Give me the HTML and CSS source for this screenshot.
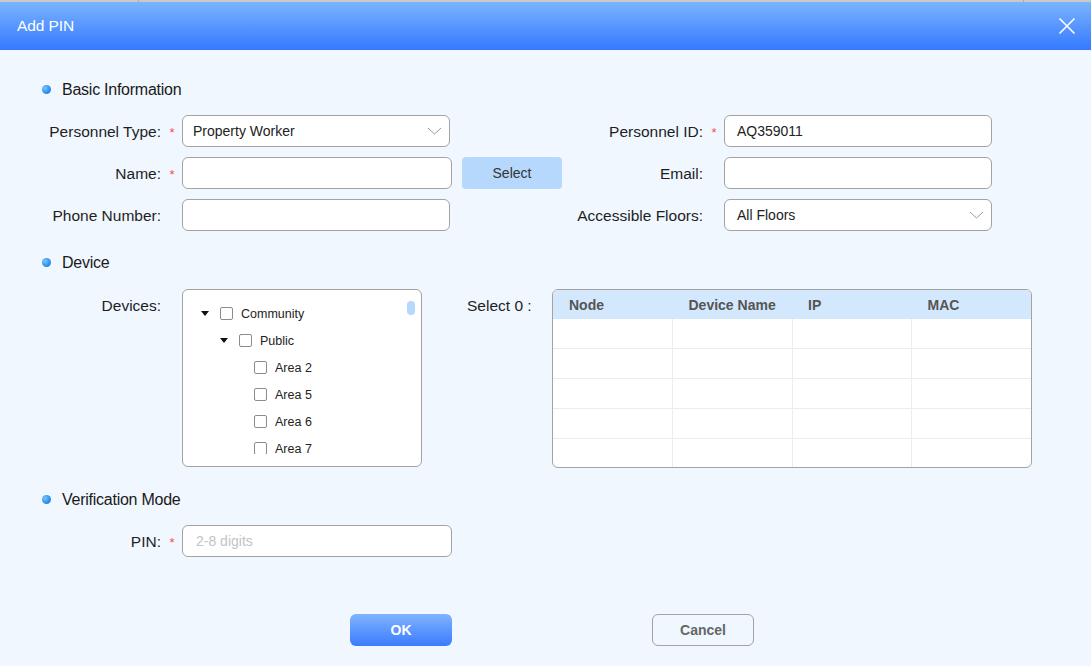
FILE: index.html
```html
<!DOCTYPE html>
<html>
<head>
<meta charset="utf-8">
<title>Add PIN</title>
<link rel="stylesheet" href="styles.css">
</head>
<body>
<div class="dialog">
  <div class="topstrip"><span class="sep sep1"></span><span class="sep sep2"></span></div>
  <div class="header">
    <span class="title">Add PIN</span>
    <svg class="close" width="18" height="18" viewBox="0 0 18 18"><path d="M1.5 1.5 L16.5 16.5 M16.5 1.5 L1.5 16.5" stroke="#fff" stroke-width="1.6" fill="none"/></svg>
  </div>
  <div class="content">
    <div class="section-title"><span class="dot"></span>Basic Information</div>
    <div class="rows">
      <div class="row">
        <label class="lbl">Personnel Type:</label><span class="star">*</span>
        <div class="input select-box"><span>Property Worker</span><svg class="chev" width="15" height="8" viewBox="0 0 15 8"><path d="M1 1 L7.5 7 L14 1" stroke="#9a9a9a" stroke-width="1" fill="none"/></svg></div>
        <span class="btn-slot"></span>
        <label class="lbl lbl-r">Personnel ID:</label><span class="star">*</span>
        <div class="input input-r"><span>AQ359011</span></div>
      </div>
      <div class="row">
        <label class="lbl">Name:</label><span class="star">*</span>
        <div class="input input-wide"></div>
        <span class="btn-slot slot-narrow"><button class="select-btn">Select</button></span>
        <label class="lbl lbl-r">Email:</label><span class="star"></span>
        <div class="input input-r"></div>
      </div>
      <div class="row">
        <label class="lbl">Phone Number:</label><span class="star"></span>
        <div class="input"></div>
        <span class="btn-slot"></span>
        <label class="lbl lbl-r">Accessible Floors:</label><span class="star"></span>
        <div class="input input-r select-box"><span>All Floors</span><svg class="chev" width="15" height="8" viewBox="0 0 15 8"><path d="M1 1 L7.5 7 L14 1" stroke="#9a9a9a" stroke-width="1" fill="none"/></svg></div>
      </div>
    </div>

    <div class="section-title sec-device"><span class="dot"></span>Device</div>
    <div class="device-row">
      <label class="lbl lbl-top">Devices:</label><span class="star"></span>
      <div class="tree-box">
        <div class="tree">
          <div class="node lv1"><span class="tri"></span><span class="cb"></span>Community</div>
          <div class="node lv2"><span class="tri"></span><span class="cb"></span>Public</div>
          <div class="node lv3"><span class="cb"></span>Area 2</div>
          <div class="node lv3"><span class="cb"></span>Area 5</div>
          <div class="node lv3"><span class="cb"></span>Area 6</div>
          <div class="node lv3"><span class="cb"></span>Area 7</div>
        </div>
        <span class="thumb"></span>
      </div>
      <div class="sel-lbl">Select 0 :</div>
      <div class="table-box">
        <table class="grid">
          <thead><tr><th>Node</th><th>Device Name</th><th>IP</th><th>MAC</th></tr></thead>
          <tbody>
            <tr><td></td><td></td><td></td><td></td></tr>
            <tr><td></td><td></td><td></td><td></td></tr>
            <tr><td></td><td></td><td></td><td></td></tr>
            <tr><td></td><td></td><td></td><td></td></tr>
            <tr class="last"><td></td><td></td><td></td><td></td></tr>
          </tbody>
        </table>
      </div>
    </div>

    <div class="section-title sec-verify"><span class="dot"></span>Verification Mode</div>
    <div class="row">
      <label class="lbl">PIN:</label><span class="star">*</span>
      <div class="input input-wide"><span class="ph">2-8 digits</span></div>
    </div>

    <div class="footer">
      <button class="ok">OK</button>
      <button class="cancel">Cancel</button>
    </div>
  </div>
</div>
</body>
</html>
```

FILE: styles.css
```css
html, body {
  margin: 0;
  padding: 0;
}
body {
  width: 1091px;
  height: 666px;
  overflow: hidden;
  background: #f0f7ff;
  font-family: "Liberation Sans", Arial, sans-serif;
  color: #222;
}
.dialog {
  width: 1091px;
  height: 666px;
  background: #f0f7ff;
}
.topstrip {
  height: 2px;
  background: #c9c9c9;
  position: relative;
}
.sep {
  position: absolute;
  top: 0;
  width: 1px;
  height: 2px;
  background: #aaa;
}
.sep1 { left: 138px; }
.sep2 { left: 1023px; }
.header {
  height: 48px;
  background: linear-gradient(to bottom, #7ab4ff 0%, #3579ff 100%);
  display: flex;
  align-items: center;
  justify-content: space-between;
  padding: 0 15px 0 17px;
}
.title {
  color: #fff;
  font-size: 15.5px;
  letter-spacing: -0.1px;
}
.close {
  display: block;
}
.content {
  padding-top: 29px;
}
.section-title {
  height: 20px;
  box-sizing: border-box;
  padding-top: 2px;
  display: flex;
  align-items: center;
  font-size: 16px;
  letter-spacing: -0.25px;
  color: #1a1a1a;
  padding-left: 42px;
}
.dot {
  width: 9px;
  height: 9px;
  border-radius: 50%;
  background: radial-gradient(circle at 35% 35%, #7cc6ff 0%, #2a8ee8 60%, #1b74d0 100%);
  margin-right: 11px;
  margin-top: -2px;
}
.rows {
  margin-top: 16px;
  display: flex;
  flex-direction: column;
  gap: 10px;
}
.row {
  display: flex;
  align-items: center;
  height: 32px;
}
.lbl {
  width: 162px;
  box-sizing: border-box;
  padding-right: 1px;
  padding-top: 2px;
  text-align: right;
  font-size: 15.5px;
  color: #1e1e1e;
  white-space: nowrap;
}
.lbl-r {
  width: 142px;
}
.star {
  width: 20px;
  text-align: center;
  color: #f0504f;
  font-size: 13px;
  padding-top: 2px;
  box-sizing: border-box;
}
.input {
  width: 268px;
  height: 32px;
  box-sizing: border-box;
  border: 1px solid #a3a3a3;
  border-radius: 6px;
  background: #fff;
  display: flex;
  align-items: center;
  padding: 0 10px;
  font-size: 14px;
  color: #222;
}
.input-wide {
  width: 270px;
}
.input-r {
  width: 268px;
  padding-left: 12px;
}
.select-box {
  justify-content: space-between;
  padding-right: 7px;
}
.chev {
  display: block;
}
.ph {
  color: #c3c3c3;
  padding-left: 3px;
}
.btn-slot {
  width: 100px;
  margin-left: 12px;
  height: 32px;
}
.slot-narrow {
  margin-left: 10px;
}
.select-btn {
  width: 100px;
  height: 32px;
  border: none;
  border-radius: 4px;
  background: #b6d8fc;
  font-family: "Liberation Sans", Arial, sans-serif;
  font-size: 14px;
  color: #333;
  padding: 0;
}
.sec-device {
  margin-top: 21px;
}
.device-row {
  display: flex;
  margin-top: 17px;
  height: 178px;
}
.lbl-top {
  padding-top: 8px;
}
.tree-box {
  width: 240px;
  height: 178px;
  box-sizing: border-box;
  border: 1px solid #a3a3a3;
  border-radius: 6px;
  background: #fff;
  position: relative;
  padding: 10px 0 0 0;
}
.tree {
  height: 154px;
  overflow: hidden;
}
.node {
  height: 27px;
  display: flex;
  align-items: center;
  font-size: 12.5px;
  color: #222;
  white-space: nowrap;
}
.lv1 { padding-left: 18px; }
.lv2 { padding-left: 37px; }
.lv3 { padding-left: 71px; }
.tri {
  width: 0;
  height: 0;
  border-left: 4px solid transparent;
  border-right: 4px solid transparent;
  border-top: 5px solid #111;
  margin-right: 11px;
}
.cb {
  width: 13px;
  height: 13px;
  box-sizing: border-box;
  border: 1px solid #8c8c8c;
  border-radius: 2px;
  background: #fff;
  margin-right: 8px;
}
.thumb {
  position: absolute;
  top: 11px;
  right: 6px;
  width: 8px;
  height: 14px;
  border-radius: 4px;
  background: #b6d8fc;
}
.sel-lbl {
  width: 130px;
  box-sizing: border-box;
  padding-left: 45px;
  padding-top: 8px;
  font-size: 15.5px;
  color: #1e1e1e;
  white-space: nowrap;
}
.table-box {
  width: 480px;
  height: 179px;
  box-sizing: border-box;
  border: 1px solid #a3a3a3;
  border-radius: 6px;
  background: #fff;
  overflow: hidden;
}
.grid {
  width: 100%;
  border-collapse: collapse;
  table-layout: fixed;
}
.grid th {
  height: 29px;
  background: #d4e8fd;
  text-align: left;
  font-size: 14px;
  font-weight: bold;
  color: #555;
  padding: 0 0 0 16px;
}
.grid td {
  height: 29px;
  border-right: 1px solid #ececec;
  border-bottom: 1px solid #ececec;
  padding: 0;
}
.grid td:last-child {
  border-right: none;
}
.grid tr.last td {
  border-bottom: none;
  height: 28px;
}
.sec-verify {
  margin-top: 22px;
}
.sec-verify + .row {
  margin-top: 16px;
}
.footer {
  margin-top: 57px;
  display: flex;
  padding-left: 350px;
  gap: 200px;
}
.ok, .cancel {
  width: 102px;
  height: 32px;
  border-radius: 6px;
  font-family: "Liberation Sans", Arial, sans-serif;
  font-size: 14px;
  font-weight: bold;
  padding: 0;
}
.ok {
  border: none;
  color: #fff;
  background: linear-gradient(to bottom, #80b3ff 0%, #3a7cff 100%);
}
.cancel {
  border: 1px solid #a3a3a3;
  background: #f0f7ff;
  color: #666;
}
```
